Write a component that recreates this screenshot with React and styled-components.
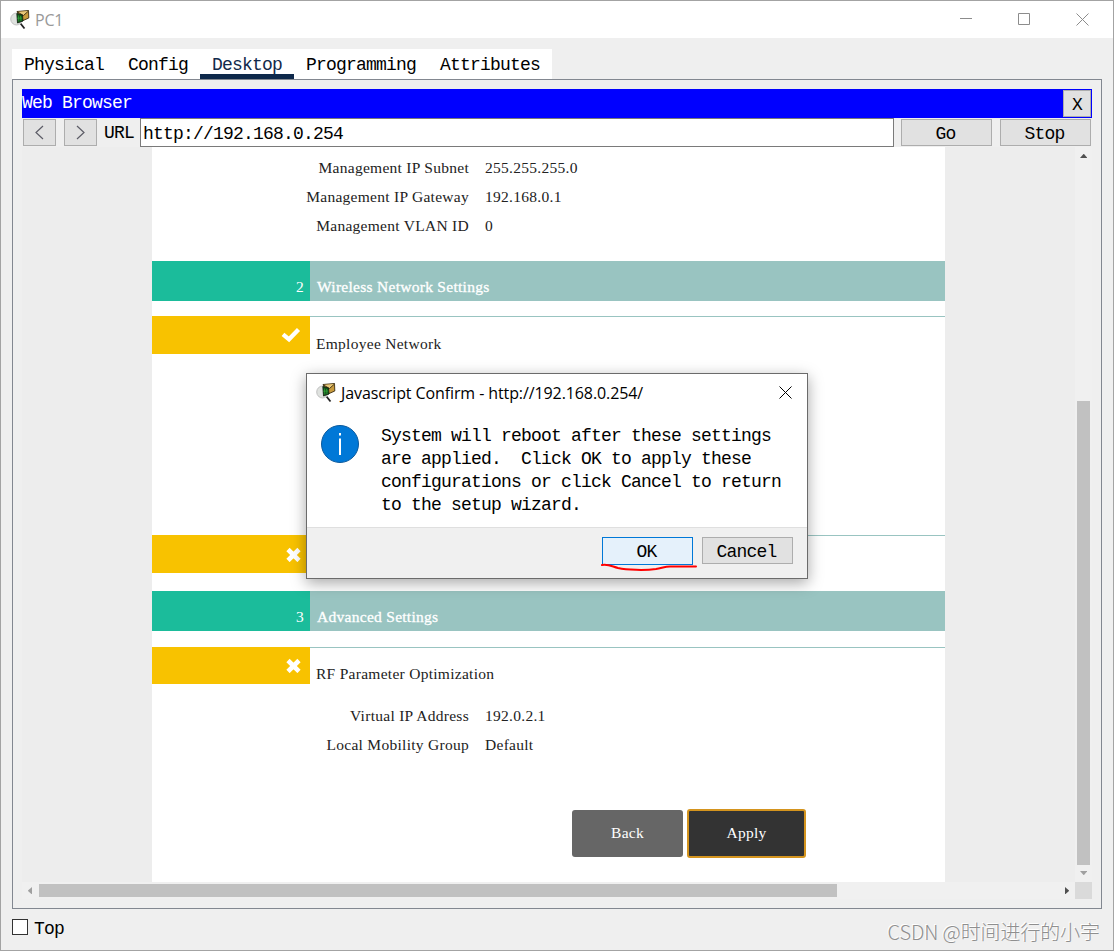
import React from "react";
import styled, { createGlobalStyle } from "styled-components";

const tabs = ["Physical", "Config", "Desktop", "Programming", "Attributes"];

const managementRows = [
  ["Management IP Subnet", "255.255.255.0"],
  ["Management IP Gateway", "192.168.0.1"],
  ["Management VLAN ID", "0"],
];

const advancedRows = [
  ["Virtual IP Address", "192.0.2.1"],
  ["Local Mobility Group", "Default"],
];

const TracerIcon = () => (
  <svg width="20" height="20" viewBox="0 0 20 20">
    <path d="M10.500 13.500l4 5" stroke="#222" strokeWidth="1.8" />
    <ellipse cx="6.500" cy="9" rx="5.800" ry="6" fill="#dfe2df" stroke="#b5b5b5" strokeWidth=".8" />
    <path d="M7 1.500L18.500.5l.3 7.500L12 11z" fill="#c89a3c" stroke="#3a2c12" strokeWidth=".9" />
    <path d="M7.500 2l6 3.500 5-4.500" fill="#e8c87a" stroke="#3a2c12" strokeWidth=".9" />
    <path d="M6.800 3.500l5.700 1.500.5 6-5.500 2z" fill="#14501a" stroke="#0b1c0c" strokeWidth=".8" />
    <path d="M8.300 5.500l.6 6M10.500 6l.5 5M7.200 8.200l5-.2" stroke="#2fae3a" strokeWidth=".7" />
  </svg>
);

const CrossIcon = ({ size = 13 }) => (
  <svg width={size} height={size} viewBox="0 0 13 13" fill="none" stroke="currentColor">
    <path d="M.5.5l12 12M12.500.5l-12 12" />
  </svg>
);

const CheckMark = () => (
  <svg width="20" height="16" viewBox="0 0 20 16">
    <path d="M2 7.300l6 5L17.500 2.500" fill="none" stroke="#fff" strokeWidth="4.300" />
  </svg>
);

const FailMark = () => (
  <svg width="15" height="15" viewBox="0 0 15 15">
    <path d="M2 2.500l11 11M13 2.500L2 13.500" fill="none" stroke="#fff" strokeWidth="4.600" />
  </svg>
);

const Arrow = ({ d, color = "#505050" }) => (
  <svg width="7" height="7" viewBox="0 0 7 7">
    <path d={d} fill={color} />
  </svg>
);

const Chevron = ({ d }) => (
  <svg width="10" height="15" viewBox="0 0 10 15">
    <path d={d} fill="none" stroke="#5c5c66" strokeWidth="1.200" />
  </svg>
);

function Rows({ items }) {
  return items.map(([label, value]) => (
    <Row key={label}>
      <RowLabel>{label}</RowLabel>
      <RowValue>{value}</RowValue>
    </Row>
  ));
}

function Confirm() {
  return (
    <Dialog>
      <DialogTitle>
        <TracerIcon />
        <DialogName>Javascript Confirm - http://192.168.0.254/</DialogName>
        <CrossIcon />
      </DialogTitle>
      <DialogBody>
        <InfoBadge viewBox="0 0 38 38">
          <circle cx="19" cy="19" r="18.500" fill="#0078d7" stroke="#0b5a9d" />
          <path d="M19 13.500V30M19 8v2.500" stroke="#fff" strokeWidth="2" />
        </InfoBadge>
        <Message>
          System will reboot after these settings
          <br />
          are applied.&nbsp; Click OK to apply these
          <br />
          configurations or click Cancel to return
          <br />
          to the setup wizard.
        </Message>
      </DialogBody>
      <DialogFooter>
        <Button $primary>OK</Button>
        <Button>Cancel</Button>
        <Scribble viewBox="0 0 98 10">
          <path
            d="M2 2C9 1 12 3.500 18 5c9 2 27 2.500 38 1 6-1 9-2.500 14-2.500H96"
            fill="none"
            stroke="#f00"
            strokeWidth="2"
            strokeLinecap="round"
          />
        </Scribble>
      </DialogFooter>
    </Dialog>
  );
}

export default function App() {
  return (
    <Window>
      <GlobalStyle />
      <TitleBar>
        <TracerIcon />
        <Title>PC1</Title>
        <Controls>
          <svg width="12" height="13" viewBox="0 0 12 13" stroke="currentColor">
            <path d="M0 5.500h12" />
          </svg>
          <svg width="12" height="13" viewBox="0 0 12 13" fill="none" stroke="currentColor">
            <path d="M.5.5h11v11H.5z" />
          </svg>
          <CrossIcon />
        </Controls>
      </TitleBar>
      <Tabs>
        {tabs.map((tab) => (
          <Tab key={tab} $active={tab === "Desktop"}>
            {tab}
          </Tab>
        ))}
      </Tabs>
      <Panel>
        <AppBar>
          Web Browser
          <AppClose>X</AppClose>
        </AppBar>
        <Toolbar>
          <NavButton>
            <Chevron d="M8 1L1 7.500l7 6.500" />
          </NavButton>
          <NavButton>
            <Chevron d="M1 1l7 6.500-7 6.500" />
          </NavButton>
          <UrlLabel>URL</UrlLabel>
          <UrlField>http://192.168.0.254</UrlField>
          <Button>Go</Button>
          <Button>Stop</Button>
        </Toolbar>
        <Viewport>
          <Page>
            <RowGroup $top={6}>
              <Rows items={managementRows} />
            </RowGroup>
            <Section $top={21}>
              <SectionNumber>2</SectionNumber>
              <SectionTitle>Wireless Network Settings</SectionTitle>
            </Section>
            <Item $top={15} $height={38}>
              <ItemFlag>
                <CheckMark />
              </ItemFlag>
              <ItemTitle>Employee Network</ItemTitle>
            </Item>
            <Item $top={181} $height={38}>
              <ItemFlag>
                <FailMark />
              </ItemFlag>
              <ItemTitle />
            </Item>
            <Section $top={18}>
              <SectionNumber>3</SectionNumber>
              <SectionTitle>Advanced Settings</SectionTitle>
            </Section>
            <Item $top={16} $height={37}>
              <ItemFlag>
                <FailMark />
              </ItemFlag>
              <ItemTitle $line={52}>RF Parameter Optimization</ItemTitle>
            </Item>
            <RowGroup $top={17}>
              <Rows items={advancedRows} />
            </RowGroup>
            <Actions>
              <PageButton>Back</PageButton>
              <PageButton $focused>Apply</PageButton>
            </Actions>
          </Page>
          <VScroll>
            <Arrow d="M0 6h7.500L4 2H3.500z" />
            <VThumb />
            <Arrow d="M0 2h7.500L4 6H3.500z" color="#a0a0a0" />
          </VScroll>
        </Viewport>
        <HScroll>
          <Arrow d="M6 0v7.500L2 4v-.5z" color="#a0a0a0" />
          <HThumb />
          <Arrow d="M2 0v7.500L6 4v-.5z" />
          <Corner />
        </HScroll>
      </Panel>
      <Footer>
        <Checkbox />
        <FooterLabel>Top</FooterLabel>
        <Watermark>CSDN @时间进行的小宇</Watermark>
      </Footer>
      <Confirm />
    </Window>
  );
}

const GlobalStyle = createGlobalStyle`
  * {
    box-sizing: border-box;
  }

  body {
    margin: 0;
    overflow: hidden;
  }

  svg {
    display: block;
    flex-shrink: 0;
  }
`;

const Window = styled.div`
  position: relative;
  display: flex;
  flex-direction: column;
  width: 1114px;
  height: 951px;
  border: 1px solid #a3a3a3;
  background: #efefef;
  color: #000;
  font-family: "Liberation Mono", monospace;
  font-size: 18px;
  letter-spacing: -0.8px;
  white-space: nowrap;
`;

const TitleBar = styled.div`
  display: flex;
  align-items: center;
  height: 37px;
  padding: 0 24px 0 9px;
  background: #fff;
`;

const Title = styled.span`
  flex: 1;
  margin-left: 5px;
  color: #999;
  font-family: "Open Sans", sans-serif;
  font-size: 16px;
  line-height: 34px;
  letter-spacing: -0.2px;
`;

const Controls = styled.div`
  display: flex;
  gap: 46px;
  color: #8c8c8c;
`;

const Tabs = styled.div`
  display: flex;
  align-self: flex-start;
  height: 30px;
  margin: 11px 0 0 11px;
  background: #fff;
`;

const Tab = styled.div`
  padding: 0 12px;
  line-height: 33px;
  color: ${(props) => (props.$active ? "#12294b" : "#000")};
  box-shadow: ${(props) => (props.$active ? "inset 0 -5px #0e294b" : "none")};
`;

const Panel = styled.div`
  width: 1090px;
  height: 830px;
  margin-left: 11px;
  padding: 9px;
  border: 1px solid #828790;
`;

const AppBar = styled.div`
  display: flex;
  justify-content: space-between;
  height: 29px;
  padding: 1px;
  padding-left: 0;
  background: #00f;
  color: #fff;
  line-height: 27px;
`;

const AppClose = styled.div`
  width: 28px;
  height: 27px;
  border: 1px solid #adadad;
  background: #e1e1e1;
  color: #000;
  line-height: 29px;
  text-align: center;
`;

const Toolbar = styled.div`
  display: flex;
  align-items: center;
  height: 29px;
  padding: 0 1px;
  gap: 8px;
`;

const NavButton = styled.div`
  display: flex;
  align-items: center;
  justify-content: center;
  width: 33px;
  height: 27px;
  border: 1px solid #adadad;
  background: #e1e1e1;
`;

const UrlLabel = styled.span`
  width: 28px;
  margin-left: -1px;
`;

const UrlField = styled.div`
  flex: 1;
  height: 29px;
  margin-right: -1px;
  padding-left: 2px;
  border: 1px solid #7a7a7a;
  background: #fff;
  line-height: 30px;
`;

const Button = styled.div`
  width: 91px;
  height: ${(props) => (props.$primary ? 28 : 27)}px;
  padding-right: 2px;
  border: 1px solid ${(props) => (props.$primary ? "#0078d7" : "#adadad")};
  background: ${(props) => (props.$primary ? "#e5f1fb" : "#e1e1e1")};
  line-height: 29px;
  text-align: center;
`;

const Viewport = styled.div`
  display: flex;
  justify-content: space-between;
  height: 735px;
  padding-left: 130px;
  background: #ededed;
`;

const Page = styled.div`
  width: 793px;
  background: #fff;
  color: #222;
  font-family: "Liberation Serif", serif;
  font-size: 15.5px;
  letter-spacing: 0.28px;
`;

const RowGroup = styled.div`
  padding-top: ${(props) => props.$top}px;
`;

const Row = styled.div`
  display: flex;
  gap: 16px;
  height: 29px;
  line-height: 29px;
`;

const RowLabel = styled.span`
  width: 317px;
  text-align: right;
`;

const RowValue = styled.span``;

const Section = styled.div`
  display: flex;
  height: 40px;
  margin-top: ${(props) => props.$top}px;
  color: #fff;
  line-height: 51px;
`;

const SectionNumber = styled.div`
  width: 158px;
  padding-right: 6px;
  background: #1bbc9b;
  text-align: right;
`;

const SectionTitle = styled.div`
  flex: 1;
  padding-left: 7px;
  background: #99c4c1;
  -webkit-text-stroke: 0.3px #fff;
`;

const Item = styled.div`
  display: flex;
  height: ${(props) => props.$height}px;
  margin-top: ${(props) => props.$top}px;
`;

const ItemFlag = styled.div`
  display: flex;
  align-items: center;
  justify-content: flex-end;
  width: 158px;
  padding-right: 9px;
  background: #f8c200;
`;

const ItemTitle = styled.div`
  flex: 1;
  padding-left: 6px;
  border-top: 1px solid #99c4c1;
  line-height: ${(props) => props.$line || 53}px;
`;

const Actions = styled.div`
  display: flex;
  align-items: center;
  gap: 4px;
  height: 49px;
  margin: 50px 0 0 420px;
`;

const PageButton = styled.div`
  width: ${(props) => (props.$focused ? 119 : 111)}px;
  height: ${(props) => (props.$focused ? 49 : 47)}px;
  border: ${(props) => (props.$focused ? "2px solid #d4941e" : "0")};
  border-radius: 3px;
  background: ${(props) => (props.$focused ? "#333" : "#666")};
  color: #fff;
  line-height: ${(props) => (props.$focused ? 43 : 45)}px;
  text-align: center;
`;

const VScroll = styled.div`
  display: flex;
  flex-direction: column;
  align-items: center;
  width: 17px;
  padding: 5px 0 6px;
  background: #f0f0f0;
`;

const VThumb = styled.div`
  width: 13px;
  height: 464px;
  margin: auto 0 4px;
  background: #c1c1c1;
`;

const HScroll = styled.div`
  display: flex;
  align-items: center;
  height: 17px;
  padding-left: 4px;
  background: #f0f0f0;
`;

const HThumb = styled.div`
  width: 798px;
  height: 13px;
  margin: 0 auto 0 6px;
  background: #c1c1c1;
`;

const Corner = styled.div`
  width: 17px;
  height: 17px;
  margin-left: 5px;
  background: #dadada;
`;

const Footer = styled.div`
  display: flex;
  align-items: center;
  height: 38px;
  padding: 0 13px 0 11px;
`;

const FooterLabel = styled.span`
  padding-top: 2px;
`;

const Checkbox = styled.div`
  width: 16px;
  height: 16px;
  margin: 0 6px 2px 0;
  border: 1px solid #333;
  background: #fff;
`;

const Watermark = styled.span`
  margin-left: auto;
  padding-top: 8px;
  color: #8f8f8f;
  font-family: "Noto Sans CJK SC", sans-serif;
  font-size: 20px;
  font-weight: 300;
  line-height: 30px;
  letter-spacing: -0.1px;
  text-shadow: -1px -1px #fff;
`;

const Dialog = styled.div`
  position: absolute;
  left: 305px;
  top: 372px;
  width: 502px;
  height: 206px;
  border: 1px solid #6b6b6b;
  background: #fff;
  box-shadow: 0 4px 14px rgba(0, 0, 0, 0.35);
`;

const DialogTitle = styled.div`
  display: flex;
  align-items: center;
  height: 37px;
  padding: 0 15px 0 9px;
`;

const DialogName = styled.span`
  flex: 1;
  margin-left: 5px;
  font-family: "Open Sans", sans-serif;
  font-size: 16px;
  line-height: 34px;
  letter-spacing: -0.1px;
`;

const DialogBody = styled.div`
  display: flex;
  height: 116px;
  padding: 14px 0 0 14px;
`;

const InfoBadge = styled.svg`
  width: 38px;
  height: 38px;
`;

const Message = styled.div`
  margin-left: 22px;
  line-height: 23px;
`;

const DialogFooter = styled.div`
  position: relative;
  display: flex;
  justify-content: flex-end;
  gap: 9px;
  height: 51px;
  padding: 9px 14px 0 0;
  border-top: 1px solid #dfdfdf;
  background: #f0f0f0;
`;

/* red pen stroke drawn under the OK button */
const Scribble = styled.svg`
  position: absolute;
  left: 293px;
  top: 35px;
  width: 98px;
  height: 10px;
`;
